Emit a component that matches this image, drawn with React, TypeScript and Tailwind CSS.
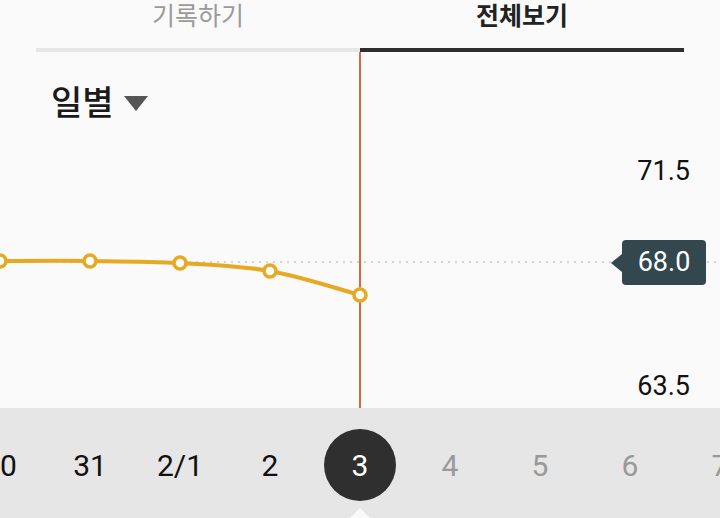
import React from "react";

const points = [
  { x: 0, y: 209 },
  { x: 90, y: 209 },
  { x: 180, y: 211 },
  { x: 270, y: 219 },
  { x: 360, y: 243 },
];

const days = [
  { label: "30", state: "past" },
  { label: "31", state: "past" },
  { label: "2/1", state: "past" },
  { label: "2", state: "past" },
  { label: "3", state: "current" },
  { label: "4", state: "future" },
  { label: "5", state: "future" },
  { label: "6", state: "future" },
  { label: "7", state: "future" },
];

// catmull-rom through the points
function buildPath() {
  let d = `M ${points[0].x} ${points[0].y}`;
  for (let i = 0; i < points.length - 1; i++) {
    const p0 = points[i - 1] ?? points[i];
    const p1 = points[i];
    const p2 = points[i + 1];
    const p3 = points[i + 2] ?? p2;
    const c1x = p1.x + (p2.x - p0.x) / 6;
    const c1y = p1.y + (p2.y - p0.y) / 6;
    const c2x = p2.x - (p3.x - p1.x) / 6;
    const c2y = p2.y - (p3.y - p1.y) / 6;
    d += ` C ${c1x} ${c1y}, ${c2x} ${c2y}, ${p2.x} ${p2.y}`;
  }
  return d;
}

function Tabs() {
  return (
    <div className="flex h-[52px] px-[36px]">
      <div className="flex flex-1 flex-col items-center border-b-[4px] border-[#e6e6e6]">
        <span className="mt-[-3px] text-[25px] leading-[34px] text-[#9a9a9a]">기록하기</span>
      </div>
      <div className="flex flex-1 flex-col items-center border-b-[4px] border-[#2e2e2e]">
        <span className="mt-[-3px] text-[25px] font-bold leading-[34px] text-[#222]">전체보기</span>
      </div>
    </div>
  );
}

function Chart() {
  return (
    <div className="relative h-[356px] overflow-hidden">
      <svg className="absolute inset-0" width={720} height={356} viewBox="0 0 720 356">
        <line x1={0} y1={210} x2={720} y2={210} stroke="#c9c9c9" strokeWidth={1.5} strokeDasharray="2 5" />
        <line x1={360} y1={0} x2={360} y2={356} stroke="#d9693f" strokeWidth={2} />
        <path d={buildPath()} fill="none" stroke="#e8a922" strokeWidth={4} />
        {points.map((p) => (
          <circle key={p.x} cx={p.x} cy={p.y} r={6} fill="#fff" stroke="#e8a922" strokeWidth={3.5} />
        ))}
        <text
          x={690}
          y={128}
          textAnchor="end"
          fontSize={27}
          fill="#111"
          style={{ fontFamily: "Roboto, sans-serif" }}
        >
          71.5
        </text>
        <text
          x={690}
          y={343}
          textAnchor="end"
          fontSize={27}
          fill="#111"
          style={{ fontFamily: "Roboto, sans-serif" }}
        >
          63.5
        </text>
      </svg>

      <div className="relative flex items-center gap-[10px] pl-[51px] pt-[26px]">
        <span className="text-[34px] font-medium leading-[46px] text-[#1a1a1a]">일별</span>
        <span className="mt-[4px] h-0 w-0 border-x-[12px] border-t-[15px] border-x-transparent border-t-[#555]" />
      </div>

      <div className="absolute left-[611px] top-[188px] flex items-center">
        <span className="h-0 w-0 border-y-[9px] border-r-[11px] border-y-transparent border-r-[#33474f]" />
        <span
          className="flex h-[45px] w-[84px] items-center justify-center rounded-[4px] bg-[#33474f] text-[27px] text-white"
          style={{ fontFamily: "Roboto, sans-serif" }}
        >
          68.0
        </span>
      </div>
    </div>
  );
}

function DayBar() {
  return (
    <div className="relative h-[110px] overflow-hidden bg-[#e6e6e6]">
      <div className="ml-[-45px] flex h-full items-center pt-[4px]" style={{ fontFamily: "Roboto, sans-serif" }}>
        {days.map((d) => (
          <div key={d.label} className="flex w-[90px] shrink-0 items-center justify-center">
            {d.state === "current" ? (
              <span className="flex h-[72px] w-[72px] items-center justify-center rounded-full bg-[#2f2f2f] text-[30px] text-white">
                {d.label}
              </span>
            ) : (
              <span
                className={
                  d.state === "past" ? "text-[30px] text-[#111]" : "text-[30px] text-[#999]"
                }
              >
                {d.label}
              </span>
            )}
          </div>
        ))}
      </div>
      <span className="absolute bottom-0 left-[350px] h-0 w-0 border-x-[10px] border-b-[10px] border-x-transparent border-b-[#fafafa]" />
    </div>
  );
}

export default function App() {
  return (
    <div
      className="h-[518px] w-[720px] overflow-hidden bg-[#fafafa]"
      style={{ fontFamily: "'Noto Sans CJK KR', 'Noto Sans', sans-serif" }}
    >
      <Tabs />
      <Chart />
      <DayBar />
    </div>
  );
}
